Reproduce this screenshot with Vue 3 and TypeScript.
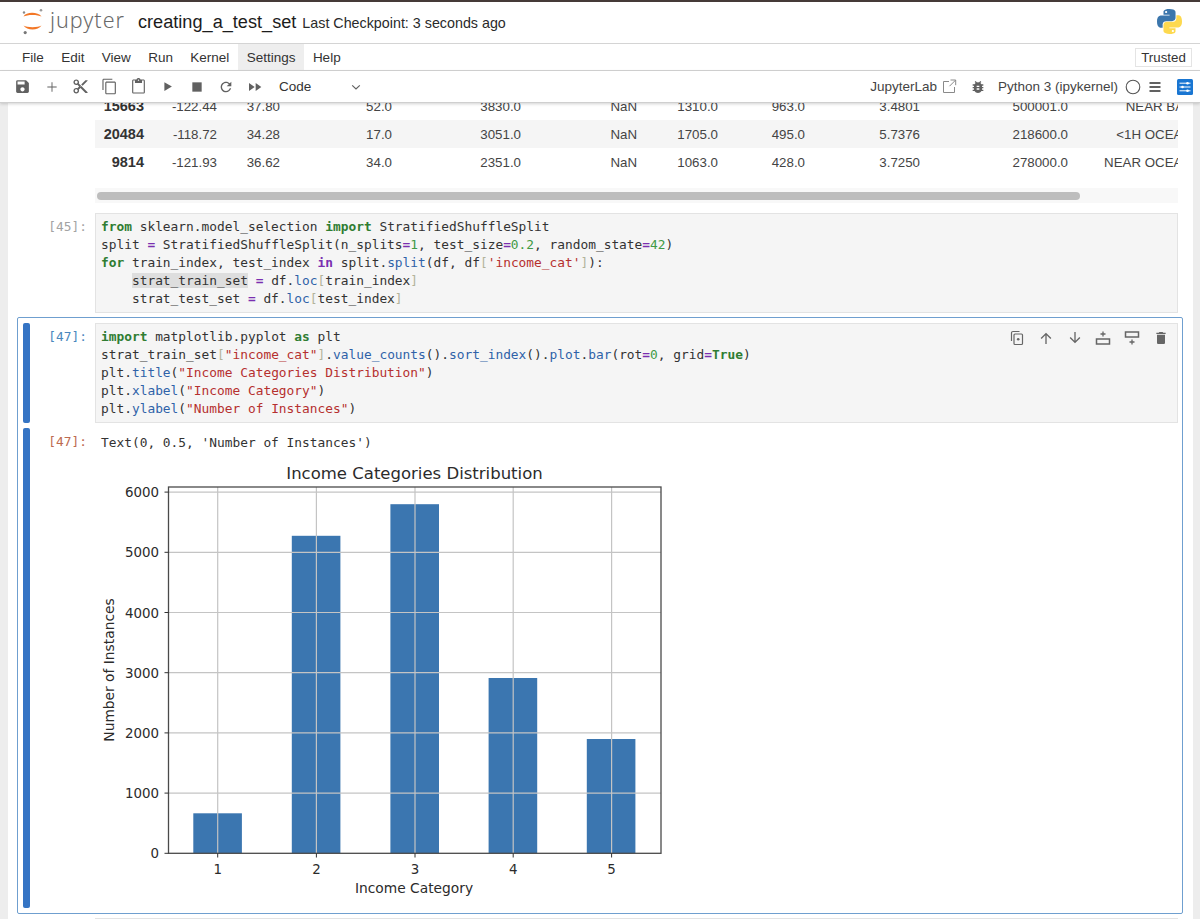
<script setup lang="ts">
type Tok = [string, string?]

const menus = ['File', 'Edit', 'View', 'Run', 'Kernel', 'Settings', 'Help']

const toolIcons: { name: string; d: string; size: number }[] = [
  { name: 'save', size: 17, d: 'M17 3H5a2 2 0 00-2 2v14c0 1.1.89 2 2 2h14c1.1 0 2-.9 2-2V7l-4-4zm-5 16c-1.66 0-3-1.34-3-3s1.34-3 3-3 3 1.34 3 3-1.34 3-3 3zm3-10H5V5h10v4z' },
  { name: 'add', size: 16, d: 'M19 12.7h-6.3V19h-1.4v-6.3H5v-1.4h6.3V5h1.4v6.3H19z' },
  { name: 'cut', size: 17, d: 'M9.64 7.64c.23-.5.36-1.05.36-1.64 0-2.21-1.79-4-4-4S2 3.79 2 6s1.79 4 4 4c.59 0 1.14-.13 1.64-.36L10 12l-2.36 2.36C7.14 14.13 6.59 14 6 14c-2.21 0-4 1.79-4 4s1.79 4 4 4 4-1.79 4-4c0-.59-.13-1.14-.36-1.64L12 14l7 7h3v-1L9.64 7.64zM6 8c-1.1 0-2-.89-2-2s.9-2 2-2 2 .89 2 2-.9 2-2 2zm0 12c-1.1 0-2-.89-2-2s.9-2 2-2 2 .89 2 2-.9 2-2 2zm6-7.5c-.28 0-.5-.22-.5-.5s.22-.5.5-.5.5.22.5.5-.22.5-.5.5zM19 3l-6 6 2 2 7-7V3h-3z' },
  { name: 'copy', size: 17, d: 'M16 1H4c-1.1 0-2 .9-2 2v14h1.6V2.6H16V1zm3 4H8c-1.1 0-2 .9-2 2v14c0 1.1.9 2 2 2h11c1.1 0 2-.9 2-2V7c0-1.1-.9-2-2-2zm.4 16.4H7.6V6.6h11.8v14.8z' },
  { name: 'paste', size: 17, d: 'M19 2h-4.18C14.4.84 13.3 0 12 0c-1.3 0-2.4.84-2.82 2H5c-1.1 0-2 .9-2 2v16c0 1.1.9 2 2 2h14c1.1 0 2-.9 2-2V4c0-1.1-.9-2-2-2zm-7 0c.55 0 1 .45 1 1s-.45 1-1 1-1-.45-1-1 .45-1 1-1zm7.4 18.4H4.6V3.6H7V7h10V3.6h2.4v16.8z' },
  { name: 'run', size: 15, d: 'M7 5v14l12-7z' },
  { name: 'stop', size: 16, d: 'M5 5h14v14H5z' },
  { name: 'restart', size: 16, d: 'M17.65 6.35C16.2 4.9 14.21 4 12 4c-4.42 0-7.99 3.58-7.99 8s3.57 8 7.99 8c3.73 0 6.84-2.55 7.73-6h-2.08c-.82 2.33-3.04 4-5.65 4-3.31 0-6-2.69-6-6s2.69-6 6-6c1.66 0 3.14.69 4.22 1.78L13 11h7V4l-2.35 2.35z' },
  { name: 'ff', size: 16, d: 'M3 18l8.5-6L3 6v12zm10-12v12l8.5-6L13 6z' }
]

const colWidths = [49, 73, 63, 112, 129, 116, 81, 87, 115, 148, 124]
const rows: { cells: string[]; odd: boolean }[] = [
  { odd: false, cells: ['15663', '-122.44', '37.80', '52.0', '3830.0', 'NaN', '1310.0', '963.0', '3.4801', '500001.0', 'NEAR BAY'] },
  { odd: true, cells: ['20484', '-118.72', '34.28', '17.0', '3051.0', 'NaN', '1705.0', '495.0', '5.7376', '218600.0', '<1H OCEAN'] },
  { odd: false, cells: ['9814', '-121.93', '36.62', '34.0', '2351.0', 'NaN', '1063.0', '428.0', '3.7250', '278000.0', 'NEAR OCEAN'] }
]

const code45: Tok[][] = [
  [['from', 'kw'], [' sklearn.model_selection '], ['import', 'kw'], [' StratifiedShuffleSplit']],
  [['split '], ['=', 'op'], [' StratifiedShuffleSplit(n_splits'], ['=', 'op'], ['1', 'num'], [', test_size'], ['=', 'op'], ['0.2', 'num'], [', random_state'], ['=', 'op'], ['42', 'num'], [')']],
  [['for', 'kw'], [' train_index, test_index '], ['in', 'opw'], [' split.'], ['split', 'attr'], ['(df, df'], ['[', 'br'], ["'income_cat'", 'str'], [']', 'br'], ['):']],
  [['    '], ['strat_train_set', 'mark'], [' '], ['=', 'op'], [' df.'], ['loc', 'attr'], ['[', 'br'], ['train_index'], [']', 'br']],
  [['    strat_test_set '], ['=', 'op'], [' df.'], ['loc', 'attr'], ['[', 'br'], ['test_index'], [']', 'br']]
]

const code47: Tok[][] = [
  [['import', 'kw'], [' matplotlib.pyplot '], ['as', 'kw'], [' plt']],
  [['strat_train_set'], ['[', 'br'], ['"income_cat"', 'str'], [']', 'br'], ['.'], ['value_counts', 'attr'], ['().'], ['sort_index', 'attr'], ['().'], ['plot', 'attr'], ['.'], ['bar', 'attr'], ['(rot'], ['=', 'op'], ['0', 'num'], [', grid'], ['=', 'op'], ['True', 'kw'], [')']],
  [['plt.'], ['title', 'attr'], ['('], ['"Income Categories Distribution"', 'str'], [')']],
  [['plt.'], ['xlabel', 'attr'], ['('], ['"Income Category"', 'str'], [')']],
  [['plt.'], ['ylabel', 'attr'], ['('], ['"Number of Instances"', 'str'], [')']]
]

const bars = [
  { label: '1', cx: 217.7, x: 193.3, top: 813.3 },
  { label: '2', cx: 316.4, x: 291.8, top: 535.8 },
  { label: '3', cx: 415, x: 390.4, top: 504.2 },
  { label: '4', cx: 513.2, x: 488.6, top: 678 },
  { label: '5', cx: 611.6, x: 586.8, top: 739 }
]
const barWidth = 48.6
const axisBottom = 853.3
const yTicks = [0, 1000, 2000, 3000, 4000, 5000, 6000].map((v) => ({
  label: String(v),
  y: axisBottom - (v / 1000) * 60.2
}))
</script>

<template>
  <div class="page">
    <header class="topbar">
      <div class="logo">
        <svg class="logo-mark" width="26" height="28" viewBox="0 0 26 28">
          <path d="M3.5 8.5C6 3.6 18 3.6 21.5 8.5C18 6.4 7 6.4 3.5 8.5Z" fill="#f37726" />
          <path d="M3.5 17.5C7 22.8 18 22.8 21.5 17.5C18 19.8 7 19.8 3.5 17.5Z" fill="#f37726" />
          <circle cx="4" cy="4.5" r="1.2" fill="#8a8a8a" />
          <circle cx="21" cy="2.2" r="1.3" fill="#9a9a9a" />
          <circle cx="5.2" cy="24.6" r="1.6" fill="#777" />
        </svg>
        <span class="logo-text">jupyter</span>
      </div>
      <span class="nb-title">creating_a_test_set</span>
      <span class="checkpoint">Last Checkpoint: 3 seconds ago</span>
      <svg class="py-logo" width="25" height="25" viewBox="0 0 110 110">
        <path fill="#3b76ac" d="M54.9 0C26.8 0 28.6 12.2 28.6 12.2l0 12.6h26.8v3.8H17.9S0 26.6 0 54.9c0 28.3 15.6 27.3 15.6 27.3h9.3V69s-.5-15.6 15.4-15.6h26.4s14.9.2 14.9-14.4V14.9S83.9 0 54.9 0zM40.2 8.4c2.7 0 4.8 2.2 4.8 4.8s-2.2 4.8-4.8 4.8-4.8-2.2-4.8-4.8 2.2-4.8 4.8-4.8z" />
        <path fill="#fdd94f" transform="rotate(180 55 55)" d="M54.9 0C26.8 0 28.6 12.2 28.6 12.2l0 12.6h26.8v3.8H17.9S0 26.6 0 54.9c0 28.3 15.6 27.3 15.6 27.3h9.3V69s-.5-15.6 15.4-15.6h26.4s14.9.2 14.9-14.4V14.9S83.9 0 54.9 0zM40.2 8.4c2.7 0 4.8 2.2 4.8 4.8s-2.2 4.8-4.8 4.8-4.8-2.2-4.8-4.8 2.2-4.8 4.8-4.8z" />
      </svg>
    </header>

    <nav class="menubar">
      <span v-for="m in menus" :key="m" class="menu-item" :class="{ hover: m === 'Settings' }">{{ m }}</span>
      <span class="trusted">Trusted</span>
    </nav>

    <div class="toolbar">
      <span v-for="ic in toolIcons" :key="ic.name" class="tool">
        <svg :width="ic.size" :height="ic.size" viewBox="0 0 24 24"><path :d="ic.d" fill="#616161" /></svg>
      </span>
      <span class="cell-type">Code</span>
      <svg class="chev" width="12" height="12" viewBox="0 0 12 12"><path d="M2.2 4.4 6 8l3.8-3.6" fill="none" stroke="#616161" stroke-width="1.2" /></svg>
      <span class="tb-right">
        <span class="tb-text">JupyterLab</span>
        <svg class="ext" width="15" height="15" viewBox="0 0 15 15">
          <path d="M7 2.5H1.5v11h11V8" fill="none" stroke="#8a8a8a" stroke-width="1" />
          <path d="M8.5 1h5.2v5.2M13.5 1.2 7.5 7.2" fill="none" stroke="#8a8a8a" stroke-width="1" />
        </svg>
        <svg class="bug" width="16" height="16" viewBox="0 0 24 24"><path fill="#616161" d="M20 8h-2.81c-.45-.78-1.07-1.45-1.82-1.96L17 4.41 15.59 3l-2.17 2.17C12.96 5.06 12.49 5 12 5c-.49 0-.96.06-1.41.17L8.41 3 7 4.41l1.62 1.63C7.88 6.55 7.26 7.22 6.81 8H4v2h2.09c-.05.33-.09.66-.09 1v1H4v2h2v1c0 .34.04.67.09 1H4v2h2.81c1.04 1.79 2.97 3 5.19 3s4.15-1.21 5.19-3H20v-2h-2.09c.05-.33.09-.66.09-1v-1h2v-2h-2v-1c0-.34-.04-.67-.09-1H20V8zm-6 8h-4v-2h4v2zm0-4h-4v-2h4v2z" /></svg>
        <span class="tb-text kernel">Python 3 (ipykernel)</span>
        <svg class="circle" width="16" height="16" viewBox="0 0 16 16"><circle cx="8" cy="8" r="6.8" fill="none" stroke="#555" stroke-width="1.1" /></svg>
        <svg class="list" width="14" height="14" viewBox="0 0 14 14"><path d="M1.5 2h11v2h-11zM1.5 6h11v2h-11zM1.5 10h11v2h-11z" fill="#616161" /></svg>
        <svg class="prop" width="16" height="16" viewBox="0 0 16 16">
          <rect width="16" height="16" rx="1.5" fill="#1976d2" />
          <path d="M2.5 4.2h11M2.5 8h11M2.5 11.8h11" stroke="#fff" stroke-width="1" />
          <circle cx="10.5" cy="4.2" r="1.3" fill="#fff" /><circle cx="5.5" cy="8" r="1.3" fill="#fff" /><circle cx="10.5" cy="11.8" r="1.3" fill="#fff" />
        </svg>
      </span>
    </div>

    <main class="notebook">
      <div class="panel">
        <div class="cell plain first">
          <div class="gutter"></div>
          <div class="prompt"></div>
          <div class="content">
            <div class="table-wrap">
              <table class="df">
                <colgroup><col v-for="(w, i) in colWidths" :key="i" :style="{ width: w + 'px' }" /></colgroup>
                <tbody>
                  <tr v-for="r in rows" :key="r.cells[0]" :class="{ odd: r.odd }">
                    <td v-for="(c, i) in r.cells" :key="i" :class="{ idx: i === 0 }">{{ c }}</td>
                  </tr>
                </tbody>
              </table>
            </div>
            <div class="scroll-track"><div class="scroll-thumb"></div></div>
          </div>
        </div>

        <div class="cell plain c45">
          <div class="gutter"></div>
          <div class="prompt mono grey">[45]:</div>
          <div class="content">
            <div class="code mono">
              <div v-for="(line, i) in code45" :key="i" class="line"><span v-for="(t, j) in line" :key="j" :class="t[1]">{{ t[0] }}</span></div>
            </div>
          </div>
        </div>

        <section class="active">
          <div class="cell">
            <div class="gutter"><div class="bar"></div></div>
            <div class="prompt mono blue">[47]:</div>
            <div class="content">
              <div class="code mono tall">
                <div v-for="(line, i) in code47" :key="i" class="line"><span v-for="(t, j) in line" :key="j" :class="t[1]">{{ t[0] }}</span></div>
                <div class="cell-tools">
                  <svg width="16" height="16" viewBox="0 0 16 16"><path d="M10.5 1.5H4A1.5 1.5 0 0 0 2.500 3v8" fill="none" stroke="#666" stroke-width="1.200" /><rect x="5" y="4" width="8.500" height="10.500" rx="1" fill="none" stroke="#666" stroke-width="1.200" /><circle cx="9.200" cy="9.200" r="1.300" fill="#666" /></svg>
                  <svg width="16" height="16" viewBox="0 0 24 24"><path fill="#666" d="M4 12l1.41 1.41L11 7.830V21h2V7.830l5.580 5.590L20 12l-8-8-8 8z" /></svg>
                  <svg width="16" height="16" viewBox="0 0 24 24"><path fill="#666" d="M20 12l-1.410-1.410L13 16.170V3h-2v13.170l-5.580-5.590L4 12l8 8 8-8z" /></svg>
                  <svg width="16" height="16" viewBox="0 0 16 16"><path d="M8 1.500v5M5.500 4h5" stroke="#666" stroke-width="1.300" fill="none" /><rect x="1.500" y="9" width="13" height="5" fill="none" stroke="#666" stroke-width="1.500" /></svg>
                  <svg width="16" height="16" viewBox="0 0 16 16"><rect x="1.500" y="2" width="13" height="5" fill="none" stroke="#666" stroke-width="1.500" /><path d="M8 9.500v5M5.500 12h5" stroke="#666" stroke-width="1.300" fill="none" /></svg>
                  <svg width="16" height="16" viewBox="0 0 24 24"><path fill="#666" d="M6 19c0 1.100.9 2 2 2h8c1.100 0 2-.9 2-2V7H6v12zM19 4h-3.500l-1-1h-5l-1 1H5v2h14V4z" /></svg>
                </div>
              </div>
            </div>
          </div>
          <div class="cell output">
            <div class="gutter"><div class="bar"></div></div>
            <div class="prompt mono red">[47]:</div>
            <div class="content">
              <div class="out-text mono">Text(0, 0.5, 'Number of Instances')</div>
              <svg class="chart" width="600" height="443" viewBox="95 460 600 443">
                <text class="ct title" x="414.500" y="478.500" text-anchor="middle">Income Categories Distribution</text>
                <rect v-for="b in bars" :key="b.label" :x="b.x" :y="b.top" :width="barWidth" :height="axisBottom - b.top" fill="#3b76b0" />
                <line v-for="b in bars" :key="'g' + b.label" :x1="b.cx" :x2="b.cx" y1="487" :y2="axisBottom" class="grid" />
                <line v-for="t in yTicks.slice(1)" :key="'h' + t.label" x1="168.500" x2="661" :y1="t.y" :y2="t.y" class="grid" />
                <rect x="168.500" y="487" width="492.500" height="366.300" fill="none" stroke="#4a4a4a" stroke-width="1.300" />
                <g v-for="t in yTicks" :key="'y' + t.label">
                  <line x1="164.500" x2="168.500" :y1="t.y" :y2="t.y" class="tick" />
                  <text class="ct" x="159" :y="t.y + 5" text-anchor="end">{{ t.label }}</text>
                </g>
                <g v-for="b in bars" :key="'x' + b.label">
                  <line :x1="b.cx" :x2="b.cx" y1="853.300" y2="857.500" class="tick" />
                  <text class="ct" :x="b.cx" y="874" text-anchor="middle">{{ b.label }}</text>
                </g>
                <text class="ct axis" x="414" y="893" text-anchor="middle">Income Category</text>
                <text class="ct axis" x="0" y="0" text-anchor="middle" transform="translate(114 670) rotate(-90)">Number of Instances</text>
              </svg>
            </div>
          </div>
        </section>

        <div class="cell plain next">
          <div class="gutter"></div>
          <div class="prompt"></div>
          <div class="content"><div class="code stub"></div></div>
        </div>
      </div>
    </main>
  </div>
</template>

<style>
html, body { margin: 0; background: #fff; }
</style>

<style scoped>
.page {
  width: 1200px;
  height: 919px;
  display: flex;
  flex-direction: column;
  overflow: hidden;
  font-family: "Liberation Sans", Arial, sans-serif;
  color: #333;
  background: #fff;
}
.topbar {
  height: 41px;
  flex: none;
  border-top: 2px solid #453a38;
  border-bottom: 1px solid #d4d4d4;
  display: flex;
  align-items: center;
  box-sizing: content-box;
}
.logo { display: flex; align-items: center; margin-left: 20px; width: 118px; flex: none; }
.logo-mark { flex: none; margin-top: -1px; }
.logo-text {
  font-family: "Noto Sans", sans-serif;
  font-weight: 300;
  font-size: 21.500px;
  letter-spacing: 1px;
  color: #6a6a6a;
  margin-left: 4px;
  margin-top: -6px;
}
.nb-title { font-size: 18.150px; color: #1c1c1c; margin-right: 6px; }
.checkpoint { font-size: 14.300px; color: #2a2a2a; }
.py-logo { margin-left: auto; margin-right: 18.500px; margin-top: -3px; }

.menubar {
  height: 26px;
  flex: none;
  border-bottom: 1px solid #d4d4d4;
  display: flex;
  align-items: stretch;
  padding-left: 13.300px;
  padding-right: 8px;
  font-size: 13.500px;
}
.menu-item { display: flex; align-items: center; padding: 0 8.700px; color: #333; }
.menu-item.hover { background: #eeeeee; }
.trusted {
  margin-left: auto;
  align-self: center;
  box-sizing: border-box;
  width: 57px;
  height: 19px;
  border: 1px solid #e4e4e4;
  display: flex;
  align-items: center;
  justify-content: center;
  font-size: 13.300px;
  color: #333;
}

.toolbar {
  height: 31px;
  flex: none;
  display: flex;
  align-items: center;
  padding-left: 8px;
  padding-right: 8px;
  font-size: 13.500px;
  border-bottom: 1px solid #cfcfcf;
  box-shadow: 0 1px 3px rgba(0, 0, 0, 0.18);
  position: relative;
  z-index: 2;
  background: #fff;
}
.tool { width: 29px; display: flex; justify-content: center; align-items: center; flex: none; }
.cell-type { margin-left: 10px; color: #333; width: 71px; }
.chev { flex: none; }
.tb-right { margin-left: auto; display: flex; align-items: center; }
.tb-text { color: #444; white-space: nowrap; }
.ext { margin-left: 5px; }
.bug { margin-left: 13px; }
.kernel { margin-left: 12px; }
.circle { margin-left: 7px; }
.list { margin-left: 7px; }
.prop { margin-left: 15px; margin-right: -1px; }

.notebook { flex: 1; min-height: 0; background: #ededed; padding: 0 7px 0 8px; overflow: hidden; }
.panel { height: 100%; background: #fff; padding: 0 10px 0 9px; overflow: hidden; }

.cell { display: flex; }
.gutter { width: 13px; flex: none; padding-left: 5px; box-sizing: content-box; }
.bar { width: 7px; height: 100%; background: #3574c4; border-radius: 2px; }
.prompt {
  width: 59px;
  flex: none;
  padding-right: 8px;
  box-sizing: border-box;
  text-align: right;
  padding-top: 5px;
  line-height: 18px;
}
.content { width: 1083px; flex: none; min-width: 0; }
.plain { padding: 0 4px 0 1px; }
.first { margin-top: -11px; }
.c45 { margin-top: 10px; }
.next { margin-top: 4px; }

.mono { font-family: "DejaVu Sans Mono", "Liberation Mono", monospace; font-size: 12.850px; }
.grey { color: #a3a3a3; }
.blue { color: #4a87bd; }
.red { color: #bd6a4f; }

.table-wrap { overflow: hidden; }
.df {
  border-collapse: collapse;
  table-layout: fixed;
  width: 1097px;
  font-size: 13.300px;
  color: #444;
}
.df td { height: 28px; padding: 0; text-align: right; white-space: nowrap; overflow: visible; }
.df tr.odd td { background: #f5f5f5; }
.df td.idx { font-weight: 700; font-size: 14.500px; color: #333; }

.scroll-track {
  margin-top: 12px;
  height: 15px;
  background: #f8f8f8;
  display: flex;
  align-items: center;
}
.scroll-thumb { width: 983px; margin-left: 2px; height: 8px; border-radius: 4px; background: #bdbdbd; }

.code {
  box-sizing: border-box;
  height: 100px;
  padding: 4px 5px;
  background: #f5f5f5;
  border: 1px solid #e3e3e3;
  line-height: 18px;
  color: #333;
  position: relative;
  white-space: pre;
}
.code.stub { height: 8px; padding: 0; border-bottom: 0; }
.line { height: 18px; }
.kw { color: #2f7d32; font-weight: 700; }
.op { color: #7a2fb0; font-weight: 700; }
.opw { color: #7a2fb0; font-weight: 700; }
.num { color: #3f9a46; }
.str { color: #b5302f; }
.attr { color: #2f62a8; }
.br { color: #b3b39a; }
.mark { background: #dedede; }

.cell-tools {
  position: absolute;
  top: 6px;
  right: 8px;
  display: flex;
  gap: 12.800px;
  align-items: center;
  background: #f5f5f5;
}
.cell-tools svg { display: block; }

.active {
  margin-top: 4px;
  box-sizing: border-box;
  border: 1px solid #6f9fcf;
  border-radius: 2px;
  width: 1166px;
  height: 597px;
  padding: 5px 4px 0 0;
}
.active .cell { margin-bottom: 5px; }
.active .cell:first-child { height: 100px; }
.output { height: 480px; }
.active .gutter .bar { height: 100%; }
.out-text { padding-top: 6px; padding-left: 6px; line-height: 18px; color: #333; height: 18px; white-space: pre; }
.chart { display: block; margin-top: 8px; }
.ct { font-family: "DejaVu Sans", sans-serif; font-size: 13.400px; fill: #2b2b2b; }
.ct.axis { font-size: 13.800px; }
.ct.title { font-size: 16.500px; }
.grid { stroke: #c4c4c4; stroke-width: 1.200; }
.tick { stroke: #333; stroke-width: 1; }
</style>
